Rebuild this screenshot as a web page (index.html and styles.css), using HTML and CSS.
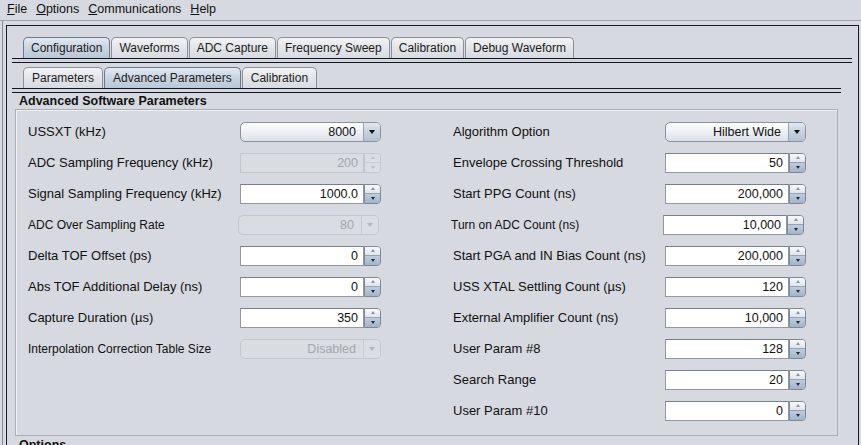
FILE: index.html
```html
<!DOCTYPE html>
<html>
<head>
<meta charset="utf-8">
<link rel="stylesheet" href="styles.css">
</head>
<body>
<div class="menubar">
  <span class="menu-item"><u>F</u>ile</span>
  <span class="menu-item"><u>O</u>ptions</span>
  <span class="menu-item"><u>C</u>ommunications</span>
  <span class="menu-item"><u>H</u>elp</span>
</div>
<div class="shell">
  <div class="window">
    <div class="tabs main-tabs">
      <div class="tab active">Configuration</div>
      <div class="tab">Waveforms</div>
      <div class="tab">ADC Capture</div>
      <div class="tab">Frequency Sweep</div>
      <div class="tab">Calibration</div>
      <div class="tab">Debug Waveform</div>
    </div>
    <div class="tabrule"></div>
    <div class="subpane">
      <div class="tabs">
        <div class="tab">Parameters</div>
        <div class="tab active">Advanced Parameters</div>
        <div class="tab">Calibration</div>
      </div>
      <div class="tabrule"></div>
      <div class="section-title">Advanced Software Parameters</div>
      <div class="group">
        <div class="col col-left">
          <div class="row"><span class="label">USSXT (kHz)</span>
            <div class="combo"><span class="value">8000</span><span class="arrow"></span></div></div>
          <div class="row"><span class="label">ADC Sampling Frequency (kHz)</span>
            <div class="spin disabled"><span class="field">200</span><span class="btns"><span class="up"></span><span class="down"></span></span></div></div>
          <div class="row"><span class="label">Signal Sampling Frequency (kHz)</span>
            <div class="spin"><span class="field">1000.0</span><span class="btns"><span class="up"></span><span class="down"></span></span></div></div>
          <div class="row"><span class="label small">ADC Over Sampling Rate</span>
            <div class="combo disabled nudge"><span class="value">80</span><span class="arrow"></span></div></div>
          <div class="row"><span class="label">Delta TOF Offset (ps)</span>
            <div class="spin"><span class="field">0</span><span class="btns"><span class="up"></span><span class="down"></span></span></div></div>
          <div class="row"><span class="label">Abs TOF Additional Delay (ns)</span>
            <div class="spin"><span class="field">0</span><span class="btns"><span class="up"></span><span class="down"></span></span></div></div>
          <div class="row"><span class="label">Capture Duration (µs)</span>
            <div class="spin"><span class="field">350</span><span class="btns"><span class="up"></span><span class="down"></span></span></div></div>
          <div class="row"><span class="label small">Interpolation Correction Table Size</span>
            <div class="combo disabled"><span class="value">Disabled</span><span class="arrow"></span></div></div>
        </div>
        <div class="col col-right">
          <div class="row"><span class="label">Algorithm Option</span>
            <div class="combo"><span class="value">Hilbert Wide</span><span class="arrow"></span></div></div>
          <div class="row"><span class="label">Envelope Crossing Threshold</span>
            <div class="spin"><span class="field">50</span><span class="btns"><span class="up"></span><span class="down"></span></span></div></div>
          <div class="row"><span class="label">Start PPG Count (ns)</span>
            <div class="spin"><span class="field">200,000</span><span class="btns"><span class="up"></span><span class="down"></span></span></div></div>
          <div class="row shift"><span class="label small">Turn on ADC Count (ns)</span>
            <div class="spin"><span class="field">10,000</span><span class="btns"><span class="up"></span><span class="down"></span></span></div></div>
          <div class="row"><span class="label">Start PGA and IN Bias Count (ns)</span>
            <div class="spin"><span class="field">200,000</span><span class="btns"><span class="up"></span><span class="down"></span></span></div></div>
          <div class="row"><span class="label">USS XTAL Settling Count (µs)</span>
            <div class="spin"><span class="field">120</span><span class="btns"><span class="up"></span><span class="down"></span></span></div></div>
          <div class="row"><span class="label">External Amplifier Count (ns)</span>
            <div class="spin"><span class="field">10,000</span><span class="btns"><span class="up"></span><span class="down"></span></span></div></div>
          <div class="row"><span class="label">User Param #8</span>
            <div class="spin"><span class="field">128</span><span class="btns"><span class="up"></span><span class="down"></span></span></div></div>
          <div class="row"><span class="label">Search Range</span>
            <div class="spin"><span class="field">20</span><span class="btns"><span class="up"></span><span class="down"></span></span></div></div>
          <div class="row"><span class="label">User Param #10</span>
            <div class="spin"><span class="field">0</span><span class="btns"><span class="up"></span><span class="down"></span></span></div></div>
        </div>
      </div>
      <div class="section-title options">Options</div>
    </div>
  </div>
</div>
</body>
</html>
```
FILE: styles.css
```css
* { box-sizing: border-box; }
html, body { margin: 0; height: 445px; overflow: hidden; }
body {
  background: #d6d9df;
  font-family: "Liberation Sans", Arial, sans-serif;
  color: #000;
}

/* menu bar */
.menubar {
  display: flex;
  gap: 9px;
  height: 21px;
  padding-left: 7px;
  font-size: 12.5px;
  line-height: 18px;
  color: #111;
  border-bottom: 1px solid #a2a6ac;
}
.menu-item u { text-decoration: underline; }

/* frame */
.shell {
  margin-left: 2px;
  border-left: 1px solid #878b91;
  padding: 4px 0 0 3px;
  height: 424px;
}
.window {
  width: 853px;
  height: 420px;
  border: 1px solid #1a1a1a;
  border-bottom: none;
  padding: 11px 6px 0 5px;
}

/* tabs */
.tabs {
  display: flex;
  padding-left: 11px;
  border-bottom: 1px solid #14161a;
}
.tab {
  height: 21px;
  padding: 0 8px;
  margin-right: 1px;
  font-size: 12px;
  line-height: 20px;
  color: #1c1c1c;
  border: 1px solid #8c9198;
  border-bottom: none;
  border-radius: 5px 5px 0 0;
  background: linear-gradient(#f2f3f6, #e2e5e9 50%, #d7dae0);
}
.main-tabs .tab { padding: 0 7px; }
.tab.active {
  border-color: #6c7989;
  background: linear-gradient(#e2e9f2, #c9d4e1 50%, #b8c7d8);
}
.tabrule {
  height: 4px;
  background: #cfd6e0;
  border-bottom: 1px solid #14161a;
}

.subpane {
  width: 829px;
  padding-top: 4px;
}

.section-title {
  margin-top: 1px;
  padding-left: 7px;
  font-size: 12.5px;
  font-weight: bold;
  line-height: 15px;
  color: #111;
}
.section-title.options { margin-top: 2px; }

/* group box */
.group {
  display: flex;
  width: 823px;
  margin-left: 3px;
  padding: 6px 0 9px 12px;
  border: 1px solid #abafb5;
  box-shadow: inset 1px 1px 0 #eef0f3;
}
.col-left { width: 425px; }
.row {
  display: flex;
  align-items: center;
  height: 31px;
}
.row.shift { margin-left: -2px; }
.label {
  width: 212px;
  font-size: 13px;
  color: #111;
  white-space: nowrap;
}
.label.small { font-size: 12px; }

/* combo box */
.combo {
  display: flex;
  width: 141px;
  height: 20px;
  border: 1px solid #8793a0;
  border-radius: 5px;
  overflow: hidden;
  background: linear-gradient(#fefefe, #eff1f4 45%, #dde1e6);
}
.combo.nudge { margin-left: -2px; }
.combo .value {
  flex: 1;
  text-align: right;
  padding-right: 7px;
  font-size: 12.5px;
  line-height: 18px;
  color: #111;
}
.combo .arrow {
  width: 17px;
  display: flex;
  align-items: center;
  justify-content: center;
  border-left: 1px solid #97a3b0;
  background: linear-gradient(#e2e9f1, #c6d2df 50%, #b2c2d3);
}
.combo .arrow::after {
  content: "";
  border-left: 3.5px solid transparent;
  border-right: 3.5px solid transparent;
  border-top: 4px solid #111;
}
.combo.disabled {
  border-color: #c3c7cd;
  background: #d9dce1;
}
.combo.disabled .value { color: #a3a7ad; }
.combo.disabled .arrow {
  border-left-color: #c8ccd1;
  background: #dadde2;
}
.combo.disabled .arrow::after { border-top-color: #b3b8bf; }

/* spinner */
.spin {
  display: flex;
  width: 141px;
  height: 20px;
}
.spin .field {
  flex: 1;
  background: #fff;
  border: 1px solid #8e99a5;
  border-top-color: #75818e;
  text-align: right;
  padding-right: 5px;
  font-size: 12.5px;
  line-height: 18px;
  color: #111;
}
.spin .btns {
  width: 17px;
  display: flex;
  flex-direction: column;
  border: 1px solid #7c8998;
  border-radius: 0 4px 4px 0;
  overflow: hidden;
}
.spin .up, .spin .down {
  flex: 1;
  display: flex;
  align-items: center;
  justify-content: center;
}
.spin .up { background: linear-gradient(#f8f9fb, #e0e5eb); }
.spin .down {
  background: linear-gradient(#bfcddc, #a2b4c8);
  border-top: 1px solid #95a3b2;
}
.spin .up::after {
  content: "";
  border-left: 2.5px solid transparent;
  border-right: 2.5px solid transparent;
  border-bottom: 3px solid #8794a2;
}
.spin .down::after {
  content: "";
  border-left: 2.5px solid transparent;
  border-right: 2.5px solid transparent;
  border-top: 3px solid #1c2a3b;
}
.spin.disabled .field {
  background: #d9dce1;
  border-color: #c3c7cd;
  color: #a3a7ad;
}
.spin.disabled .btns { border-color: #c3c7cd; }
.spin.disabled .up, .spin.disabled .down { background: #dadde2; }
.spin.disabled .down { border-top-color: #c8ccd1; }
.spin.disabled .up::after { border-bottom-color: #b9bec5; }
.spin.disabled .down::after { border-top-color: #b9bec5; }
```
